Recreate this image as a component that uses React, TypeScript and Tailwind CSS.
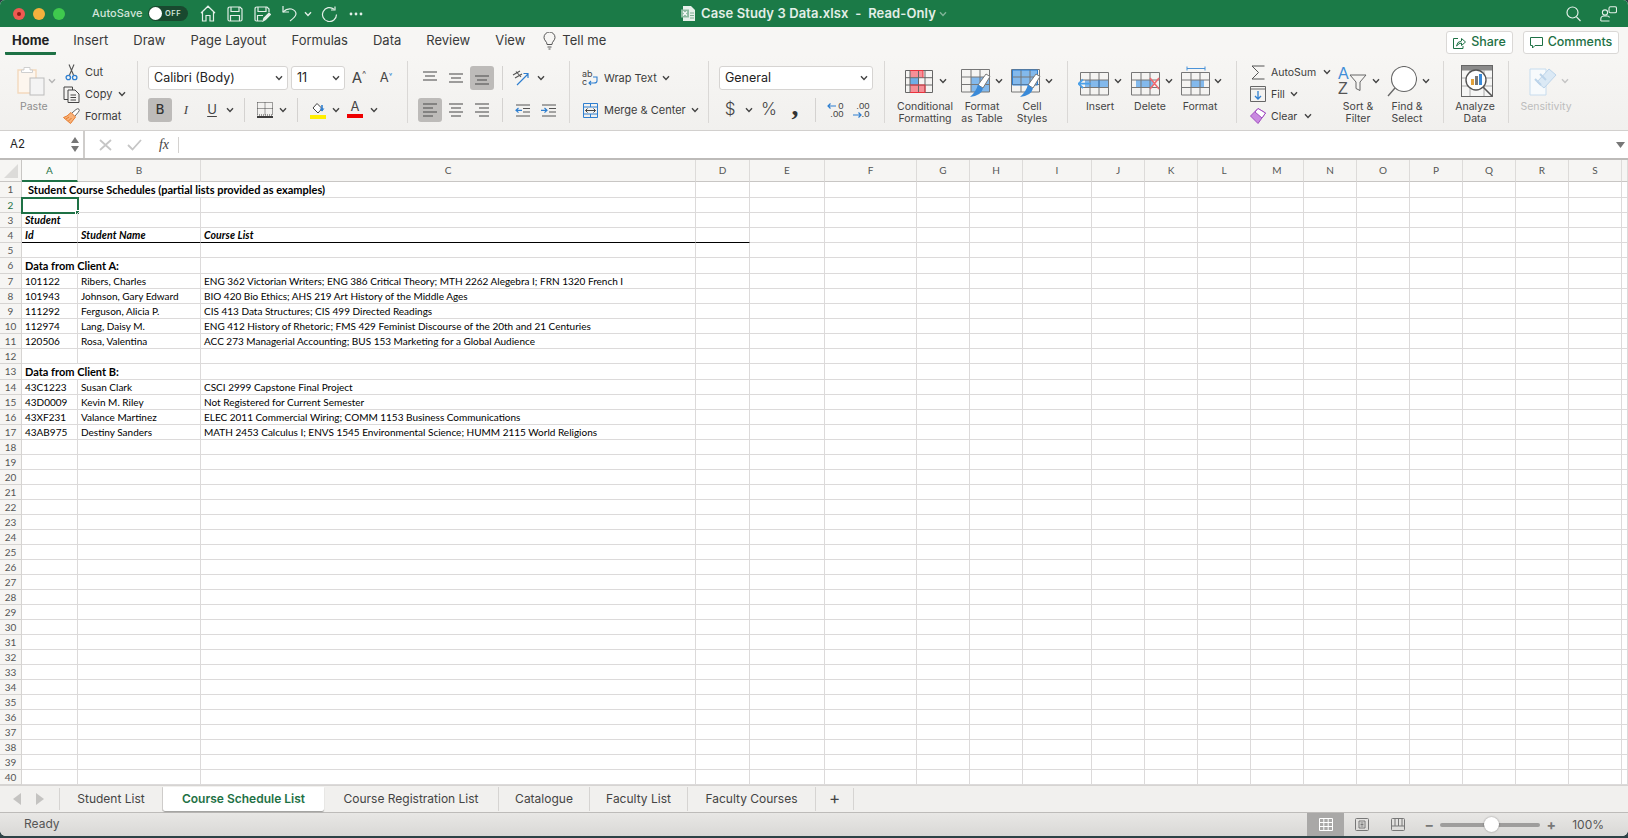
import type { ReactNode } from 'react';

const Slot = ({ className = '', children }: { className?: string; children?: ReactNode }) => (
  <div className={`flex items-center justify-center shrink-0 ${className}`}>{children}</div>
);

const Chev = ({ color = '#444' }: { color?: string }) => (
  <svg width="8" height="6" viewBox="0 0 8 6"><path d="M1 1.2 4 4.4 7 1.2" fill="none" stroke={color} strokeWidth="1.4" /></svg>
);

const Sep = () => <div className="w-px h-[24px] bg-[#d4d2d0]" />;

/* ---------- title bar icons ---------- */
const W = '#e3efe8';
const HomeIcon = () => (
  <svg width="16" height="17" viewBox="0 0 16 17" fill="none" stroke={W} strokeWidth="1.2"><path d="M1 8 8 1.2 15 8M2.5 7V16H6V10.5H10V16H13.5V7" /></svg>
);
const SaveIcon = () => (
  <svg width="16" height="16" viewBox="0 0 16 16" fill="none" stroke={W} strokeWidth="1.2"><path d="M3 1H13L15 3V13.5Q15 15 13.5 15H2.5Q1 15 1 13.5V3Q1 1 3 1Z" /><path d="M4 1V5.5H12V1M3.5 15V9.5H12.5V15" /></svg>
);
const SaveEditIcon = () => (
  <svg width="17" height="16" viewBox="0 0 17 16" fill="none" stroke={W} strokeWidth="1.2"><path d="M8 15H2.5Q1 15 1 13.5V3Q1 1 3 1H13L15 3V6" /><path d="M4 1V5.5H12V1M3.5 15V9.5H9" /><path d="M9 15 10 12 15 7 16.5 8.5 11.5 13.5Z" fill={W} /></svg>
);
const UndoIcon = () => (
  <svg width="15" height="17" viewBox="0 0 15 17" fill="none" stroke={W} strokeWidth="1.2"><path d="M1 1V7H7" /><path d="M1 7Q5 3 9.5 4 14 5.5 14 9 13.5 12 8 16" /></svg>
);
const RedoIcon = () => (
  <svg width="17" height="16" viewBox="0 0 17 16" fill="none" stroke={W} strokeWidth="1.2"><path d="M13 3.2A7 7 0 1 0 15.5 8.5" /><path d="M10 4H14V0.5" /></svg>
);
const Dots = () => (
  <svg width="14" height="4" viewBox="0 0 14 4" fill={W}><circle cx="2" cy="2" r="1.4" /><circle cx="7" cy="2" r="1.4" /><circle cx="12" cy="2" r="1.4" /></svg>
);
const XlsxIcon = () => (
  <svg width="14" height="15" viewBox="0 0 14 15"><path d="M2 0H10L14 4V15H2Z" fill="#e6f0ea" /><path d="M9 7H13M9 9.5H13M9 12H13" stroke="#7fae94" /><rect x="0" y="3.5" width="8" height="8" fill="#8db9a0" /><path d="M2 5.5 6 9.5M6 5.5 2 9.5" stroke="#fff" strokeWidth="1.1" /></svg>
);
const SearchIcon = () => (
  <svg width="15" height="16" viewBox="0 0 15 16" fill="none" stroke={W} strokeWidth="1.2"><circle cx="6.5" cy="6.5" r="5.5" /><path d="M10.5 10.8 14.5 15" /></svg>
);
const PeopleIcon = () => (
  <svg width="17" height="16" viewBox="0 0 17 16" fill="none" stroke={W} strokeWidth="1.1"><rect x="9" y="0.8" width="7.5" height="6" rx="1.5" /><circle cx="5" cy="6.5" r="2.6" /><path d="M0.8 15V13Q0.8 10 4 10H7.5Q9 10 9.5 11.5M0.8 15H9.5" /></svg>
);

/* ---------- clipboard ---------- */
const PasteIcon = () => (
  <svg width="28" height="30" viewBox="0 0 28 30"><path d="M1 4H19V27H1Z" fill="#fdf6ee" stroke="#f3d9bd" strokeWidth="1.4" /><path d="M7 4V1.5H13V4H15.5V6.5H4.5V4Z" fill="#fff" stroke="#cfcfcf" /><rect x="13" y="12" width="14" height="17" fill="#f4f4f4" stroke="#bcbcbc" /></svg>
);
const CutIcon = () => (
  <svg width="13" height="17" viewBox="0 0 13 17" fill="none"><path d="M4 0.5 8.5 11M9 0.5 4.5 11" stroke="#555" strokeWidth="1.1" /><circle cx="3.3" cy="13.5" r="2.2" stroke="#2f7fd0" strokeWidth="1.3" /><circle cx="9.7" cy="13.5" r="2.2" stroke="#2f7fd0" strokeWidth="1.3" /></svg>
);
const CopyIcon = () => (
  <svg width="17" height="17" viewBox="0 0 17 17" fill="none" stroke="#444" strokeWidth="1"><path d="M5 13.5H1V1H9.5V4" /><path d="M5 4H12L16 8V16.5H5Z" /><path d="M7.5 9H13M7.5 11.5H13M7.5 14H13" /></svg>
);
const BrushIcon = () => (
  <svg width="17" height="17" viewBox="0 0 17 17"><path d="M9 5 13 1.5Q15 0 16 1.2 17 2.5 15 4.5L12 8" fill="#fff" stroke="#666" /><path d="M8 4.5 12.5 9 7.5 15.5 0.5 9.5 4 8Z" fill="#f8b27a" stroke="#e57a2c" /><path d="M3 11 6 9M5.5 13 8.5 10" stroke="#e57a2c" /></svg>
);

/* ---------- font ---------- */
const BorderIcon = () => (
  <svg width="16" height="16" viewBox="0 0 16 16" fill="none" stroke="#444" strokeWidth="1" strokeDasharray="1 1"><path d="M0.5 0.5H15.5V13H0.5ZM8 0.5V13M0.5 6.5H15.5" /><path d="M0 15H16" stroke="#111" strokeWidth="1.6" strokeDasharray="none" /></svg>
);
const FillIcon = () => (
  <svg width="16" height="17" viewBox="0 0 16 17"><path d="M3 6 7 1.5 12 6.5 8 11Z" fill="#fff" stroke="#444" /><path d="M12 3V9" stroke="#2f7fd0" strokeWidth="1.6" /><path d="M9.5 6.5 12 9.5 14.5 6.5" fill="#2f7fd0" /><rect x="0" y="13" width="16" height="4" fill="#ffee00" /></svg>
);

/* ---------- alignment ---------- */
const Lines = ({ ys, xs }: { ys: number[]; xs: [number, number][] }) => (
  <svg width="16" height="18" viewBox="0 0 16 18" stroke="#555" strokeWidth="1.1">
    {ys.map((y, i) => (
      <path key={y} d={`M${xs[i][0]} ${y}H${xs[i][1]}`} />
    ))}
  </svg>
);
const OrientIcon = () => (
  <svg width="17" height="16" viewBox="0 0 17 16" fill="none"><path d="M1 5 8 1M3 8 10 4M4 1.5 9 7" stroke="#555" strokeWidth="1.1" /><path d="M5 15 16 4M11.5 3.5H16V8" stroke="#2f7fd0" strokeWidth="1.2" /></svg>
);
const IndentIcon = ({ inc }: { inc?: boolean }) => (
  <svg width="15" height="13" viewBox="0 0 15 13" fill="none"><path d="M1 1H15M8 4.5H15M8 8H15M1 12H15" stroke="#555" /><path d={inc ? 'M0 6.3H6M3.5 4 6 6.3 3.5 8.6' : 'M1 6.3H7M3.5 4 1 6.3 3.5 8.6'} stroke="#2f7fd0" strokeWidth="1.2" /></svg>
);
const MergeIcon = () => (
  <svg width="15" height="15" viewBox="0 0 15 15" fill="none"><path d="M0.5 0.5H14.5V14.5H0.5ZM0.5 4H14.5M0.5 11H14.5M7.5 0.5V4M7.5 11V14.5" stroke="#2f7fd0" /><path d="M2.5 7.5H12.5M4.5 5.5 2.5 7.5 4.5 9.5M10.5 5.5 12.5 7.5 10.5 9.5" stroke="#444" /></svg>
);

/* ---------- number ---------- */
const DecimalIcon = ({ more }: { more?: boolean }) => (
  <div className="relative w-[17px] h-[17px] leading-[8.5px] text-[9.5px] text-[#444] font-['Liberation_Sans',sans-serif]">
    <div className="text-right">{more ? '.00' : '0'}</div>
    <div className="text-right">{more ? '.0' : '.00'}</div>
    <svg className="absolute left-0 top-0" width="10" height="17" viewBox="0 0 10 17" fill="none" stroke="#2f7fd0" strokeWidth="1.2">
      {more ? <path d="M0 13H8M5.5 10.5 8 13 5.5 15.5" /> : <path d="M1 4H9M3.5 1.5 1 4 3.5 6.5" />}
    </svg>
  </div>
);

/* ---------- styles / cells ---------- */
const Cond = () => (
  <svg width="28" height="23" viewBox="0 0 28 23"><rect x="5" y="0.5" width="13" height="7" fill="#f78f97" /><rect x="5" y="15" width="15" height="7.5" fill="#f78f97" /><rect x="5" y="8" width="8" height="7" fill="#70aee8" /><path d="M0.5 0.5H27.5V22.5H0.5ZM0.5 7.7H27.5M0.5 15H27.5M5 0.5V22.5M13.5 0.5V22.5M20 0.5V22.5" fill="none" stroke="#666" /><path d="M5 0.5H18V7.7M5 15H20V22.5H5" fill="none" stroke="#e9333e" /></svg>
);
const TableBrush = ({ cell }: { cell?: boolean }) => (
  <svg width="30" height="30" viewBox="0 0 30 30">
    {cell ? <rect x="2" y="1" width="24" height="15" fill="#83b9ec" /> : <rect x="10" y="8" width="18" height="15" fill="#83b9ec" />}
    <path d="M0.5 0.5H28.5V23H0.5ZM0.5 8H28.5M0.5 15.5H28.5M10 0.5V23M19 0.5V23" fill="none" stroke="#777" />
    {cell && <path d="M1.5 1H26.5V16H1.5Z" fill="none" stroke="#2f7fd0" />}
    <path d="M17 16 25 5 29 7.5 22 19Z" fill="#fff" stroke="#777" />
    <path d="M17 15.5 22 19.5Q20 27 9 28 15 23 17 15.5Z" fill="#3a8ad8" />
  </svg>
);
const CellGrid = ({ children, w = 29, h = 23 }: { children?: ReactNode; w?: number; h?: number }) => (
  <svg width={w + 3} height={h + 7} viewBox={`-2 -6 ${w + 3} ${h + 7}`}>
    {children}
  </svg>
);
const gridPath = 'M0.5 0.5H28.5V23H0.5ZM0.5 8H28.5M0.5 15.5H28.5M10 0.5V23M19 0.5V23';
const InsertIcon = () => (
  <CellGrid>
    <rect x="5" y="8" width="24" height="7.5" fill="#83b9ec" />
    <path d={gridPath} fill="none" stroke="#777" />
    <path d="M19 8V15.5" stroke="#2f7fd0" />
    <path d="M11 11.7H-1M3 7.5-1.5 11.7 3 16" fill="none" stroke="#4ba0e8" strokeWidth="1.8" />
  </CellGrid>
);
const DeleteIcon = () => (
  <CellGrid>
    <rect x="5" y="8" width="17" height="7.5" fill="#83b9ec" />
    <path d={gridPath} fill="none" stroke="#777" />
    <path d="M19 6 28 17M28 6 19 17" stroke="#f06a70" strokeWidth="1.6" />
  </CellGrid>
);
const FormatIcon = () => (
  <CellGrid>
    <rect x="10" y="8" width="13" height="7.5" fill="#83b9ec" />
    <path d={gridPath} fill="none" stroke="#777" />
    <path d="M6 -3.5H24M6 -5.5V-1.5M24 -5.5V-1.5" fill="none" stroke="#4b93d8" />
  </CellGrid>
);

/* ---------- editing ---------- */
const SumIcon = () => (
  <svg width="14" height="15" viewBox="0 0 14 15" fill="none" stroke="#555"><path d="M13.5 1H1L7.5 7.5 1 14H13.5" /></svg>
);
const FillDownIcon = () => (
  <svg width="16" height="16" viewBox="0 0 16 16" fill="none"><path d="M0.5 0.5H15.5V15.5H0.5ZM0.5 3H15.5" stroke="#666" /><path d="M8 5V13M5 10 8 13 11 10" stroke="#2f7fd0" strokeWidth="1.3" /></svg>
);
const EraserIcon = () => (
  <svg width="16" height="16" viewBox="0 0 16 16"><path d="M0.5 8 8 0.5 15.5 5 8 15.5Z" fill="#c98be0" stroke="#a04cc0" /><path d="M5 4 12 10 15.5 5 8 0.5Z" fill="#fff" stroke="#a04cc0" /></svg>
);
const SortIcon = () => (
  <div className="relative w-[30px] h-[30px] font-['Liberation_Sans',sans-serif] text-[16px] leading-[15px]">
    <div className="text-[#3f8ed8]">A</div>
    <div className="text-[#555]">Z</div>
    <svg className="absolute left-[11px] top-[8px]" width="18" height="18" viewBox="0 0 18 18" fill="none" stroke="#666"><path d="M1 1H17L11 8V16.5L7 14.5V8Z" /></svg>
  </div>
);
const FindIcon = () => (
  <svg width="30" height="31" viewBox="0 0 30 31" fill="none" stroke="#666" strokeWidth="1.1"><circle cx="17" cy="13" r="12.5" fill="#fff" /><path d="M8 22 1 30" strokeWidth="1.4" /></svg>
);
const AnalyzeIcon = () => (
  <svg width="32" height="32" viewBox="0 0 32 32"><rect x="0.5" y="0.5" width="31" height="31" fill="#f6f6f5" stroke="#666" /><rect x="1" y="1" width="30" height="4.5" fill="#8a8a8a" /><path d="M1 13H31M1 21H31M9 5V31M23 5V31" stroke="#aaa" /><circle cx="15" cy="15" r="10" fill="#fff" stroke="#555" strokeWidth="1.4" /><rect x="10" y="14" width="3" height="6" fill="#e2a13a" /><rect x="14" y="11" width="3" height="9" fill="#777" /><rect x="18" y="9" width="3" height="11" fill="#3a8ad8" /><path d="M22 22 31 31" stroke="#555" strokeWidth="1.6" /></svg>
);
const SensitivityIcon = () => (
  <svg width="28" height="30" viewBox="0 0 28 30" fill="none"><path d="M1 3H17V29H1Z" fill="#f7fafc" stroke="#c7dcee" /><path d="M8 16 20 3 27 9 15 22Z" fill="#dbe9f5" stroke="#bcd4ea" /><path d="M6 13 12 19M11 8 17 14" stroke="#bcd4ea" strokeWidth="2" /></svg>
);

/* ---------- sheet data ---------- */
const COLS = ['A', 'B', 'C', 'D', 'E', 'F', 'G', 'H', 'I', 'J', 'K', 'L', 'M', 'N', 'O', 'P', 'Q', 'R', 'S', ''];
const TALL = [1, 6, 13];

const DATA: Record<number, [string, string, string]> = {
  7: ['101122', 'Ribers, Charles', 'ENG 362 Victorian Writers; ENG 386 Critical Theory; MTH 2262 Alegebra I; FRN 1320 French I'],
  8: ['101943', 'Johnson, Gary Edward', 'BIO 420 Bio Ethics; AHS 219 Art History of the Middle Ages'],
  9: ['111292', 'Ferguson, Alicia P.', 'CIS 413 Data Structures; CIS 499 Directed Readings'],
  10: ['112974', 'Lang, Daisy M.', 'ENG 412 History of Rhetoric; FMS 429 Feminist Discourse of the 20th and 21 Centuries'],
  11: ['120506', 'Rosa, Valentina', 'ACC 273 Managerial Accounting; BUS 153 Marketing for a Global Audience'],
  14: ['43C1223', 'Susan Clark', 'CSCI 2999 Capstone Final Project'],
  15: ['43D0009', 'Kevin M. Riley', 'Not Registered for Current Semester'],
  16: ['43XF231', 'Valance Martinez', 'ELEC 2011 Commercial Wiring; COMM 1153 Business Communications'],
  17: ['43AB975', 'Destiny Sanders', 'MATH 2453 Calculus I; ENVS 1545 Environmental Science; HUMM 2115 World Religions'],
};

const BOLD = 'font-bold text-[11px] leading-[15px]';
const BOLD_ITALIC = 'font-bold italic text-[10.5px] leading-[15px] tracking-[0.1px]';

function cellContent(row: number, col: number): { text?: string; cls?: string } {
  if (row === 1 && col === 0) return { text: 'Student Course Schedules (partial lists provided as examples)', cls: `${BOLD} pl-[6px]` };
  if (row === 3 && col === 0) return { text: 'Student', cls: BOLD_ITALIC };
  if (row === 4 && col <= 2) return { text: ['Id', 'Student Name', 'Course List'][col], cls: BOLD_ITALIC };
  if (row === 6 && col === 0) return { text: 'Data from Client A:', cls: BOLD };
  if (row === 13 && col === 0) return { text: 'Data from Client B:', cls: BOLD };
  if (DATA[row] && col <= 2) return { text: DATA[row][col], cls: 'text-[10px] leading-[15px]' };
  return {};
}

function Sheet() {
  const rows = Array.from({ length: 40 }, (_, i) => i + 1);
  return (
    <div className="h-[625px] overflow-hidden bg-white grid grid-cols-[22px_56px_123px_495px_54px_75px_92px_53px_53px_69px_53px_53px_53px_53px_53px_53px_53px_53px_53px_53px_6px] content-start">
      {/* corner */}
      <div className="h-[22px] bg-[#f6f5f3] border-r border-b border-[#c8c6c4] flex items-end justify-end pr-[3px] pb-[3px]">
        <svg width="14" height="14" viewBox="0 0 14 14"><path d="M14 0V14H0Z" fill="#dcdbd9" /></svg>
      </div>
      {COLS.map((c, i) => (
        <div
          key={`h${i}`}
          className={`h-[22px] flex items-center justify-center text-[10px] font-['Lato',sans-serif] border-r ${
            i === 0
              ? 'bg-[#fafaf9] text-[#1e7145] border-b-2 border-b-[#1e7145] border-r-[#e0dfdd]'
              : 'bg-[#f6f5f3] text-[#555] border-b border-b-[#c8c6c4] border-r-[#dddbd9]'
          }`}
        >
          {c}
        </div>
      ))}
      {rows.map((r) => {
        const h = TALL.includes(r) ? 'h-[16px]' : 'h-[15px]';
        return [
          <div
            key={`n${r}`}
            className={`${h} flex items-center justify-center text-[10px] font-['Lato',sans-serif] bg-[#f6f5f3] border-r border-b border-[#d6d4d2] ${
              r === 2 ? 'text-[#1e7145]' : 'text-[#555]'
            }`}
          >
            {r}
          </div>,
          ...COLS.map((_, c) => {
            const { text, cls } = cellContent(r, c);
            const noRight = (r === 1 && c <= 1) || ((r === 6 || r === 13) && c === 0);
            const rule = r === 4 && c <= 3;
            return (
              <div
                key={`${r}-${c}`}
                className={`${h} relative pl-[3px] whitespace-nowrap text-black font-['Lato',sans-serif] ${
                  noRight ? '' : 'border-r border-r-[#dcdada]'
                } border-b ${rule ? 'border-b-black' : 'border-b-[#dcdada]'} ${cls ?? ''}`}
              >
                {text}
                {r === 2 && c === 0 && (
                  <div className="absolute -left-[1px] -top-[1px] w-[58px] h-[17px] border-2 border-[#1e7145]">
                    <div className="absolute -right-[3px] -bottom-[3px] w-[5px] h-[5px] bg-[#1e7145] border border-white" />
                  </div>
                )}
              </div>
            );
          }),
        ];
      })}
    </div>
  );
}

const SMALL = "text-[11px] leading-[13px] text-[#3c3c3c]";
const LABEL = "text-[10.5px] leading-[12px] text-[#444] text-center shrink-0";

function Ribbon() {
  return (
    <div className="h-[76px] pt-[6px] flex bg-gradient-to-b from-[#f7f6f4] to-[#f1f0ee] border-b border-[#d2d0ce] shrink-0">
      {/* Clipboard */}
      <div className="w-[138px] h-[62px] flex border-r border-[#dad8d6] shrink-0">
        <div className="w-[62px] pl-[17px] pt-[5px] shrink-0">
          <div className="flex items-center">
            <PasteIcon />
            <Slot className="w-[14px]"><Chev color="#b5b5b5" /></Slot>
          </div>
          <div className="text-[10.5px] leading-[12px] text-[#8e8e8e] mt-[5px] ml-[3px]">Paste</div>
        </div>
        <div className="flex flex-col shrink-0">
          {[
            { ic: <CutIcon />, t: 'Cut' },
            { ic: <CopyIcon />, t: 'Copy', chev: true },
            { ic: <BrushIcon />, t: 'Format' },
          ].map((x) => (
            <div key={x.t} className="h-[22px] flex items-center shrink-0">
              <Slot className="w-[18px]">{x.ic}</Slot>
              <span className={`ml-[5px] ${SMALL}`}>{x.t}</span>
              {x.chev && <Slot className="w-[16px] ml-[2px]"><Chev /></Slot>}
            </div>
          ))}
        </div>
      </div>

      {/* Font */}
      <div className="w-[270px] h-[62px] pl-[10px] pt-[5px] border-r border-[#dad8d6] shrink-0">
        <div className="flex h-[24px]">
          <div className="w-[140px] bg-white rounded-[3px] border border-[#d6d4d2] flex items-center justify-between pl-[5px] pr-[4px] text-[12.5px] text-[#222]">
            Calibri (Body)<Chev />
          </div>
          <div className="w-[54px] ml-[3px] bg-white rounded-[3px] border border-[#d6d4d2] flex items-center justify-between pl-[5px] pr-[4px] text-[12.5px] text-[#222]">
            11<Chev />
          </div>
          <Slot className="w-[26px] ml-[1px] text-[15px] text-[#444]">A<span className="text-[9px] -mt-[8px] text-[#555]">^</span></Slot>
          <Slot className="w-[28px] text-[13px] text-[#444]">A<span className="text-[8px] -mt-[7px] text-[#2f7fd0]">˅</span></Slot>
        </div>
        <div className="flex h-[24px] mt-[8px] text-[#444]">
          <Slot className="w-[24px] rounded-[3px] bg-[#bdbbb9] text-[13px] font-medium text-[#333]">B</Slot>
          <Slot className="w-[28px] text-[13px] italic font-['Liberation_Serif',serif]">I</Slot>
          <Slot className="w-[24px] text-[13px] underline underline-offset-2">U</Slot>
          <Slot className="w-[12px]"><Chev /></Slot>
          <Slot className="w-[16px]"><Sep /></Slot>
          <Slot className="w-[25px]"><BorderIcon /></Slot>
          <Slot className="w-[12px]"><Chev /></Slot>
          <Slot className="w-[16px]"><Sep /></Slot>
          <Slot className="w-[25px]"><FillIcon /></Slot>
          <Slot className="w-[12px]"><Chev /></Slot>
          <div className="w-[26px] flex flex-col items-center shrink-0 pt-[1px]">
            <span className="text-[13px] leading-[14px] text-[#444]">A</span>
            <div className="w-[16px] h-[4px] bg-[#ee0000] mt-[1px]" />
          </div>
          <Slot className="w-[12px]"><Chev /></Slot>
        </div>
      </div>

      {/* Alignment */}
      <div className="w-[162px] h-[62px] pl-[10px] pt-[5px] border-r border-[#dad8d6] shrink-0">
        <div className="flex h-[24px]">
          <Slot className="w-[24px]"><Lines ys={[3, 7, 11]} xs={[[1, 15], [3, 13], [1, 15]]} /></Slot>
          <Slot className="w-[24px] ml-[2px]"><Lines ys={[5, 9, 13]} xs={[[1, 15], [3, 13], [1, 15]]} /></Slot>
          <Slot className="w-[24px] ml-[2px] bg-[#bdbbb9] rounded-[3px]"><Lines ys={[7, 11, 15]} xs={[[1, 15], [3, 13], [1, 15]]} /></Slot>
          <Slot className="w-[16px]"><Sep /></Slot>
          <Slot className="w-[20px]"><OrientIcon /></Slot>
          <Slot className="w-[12px] ml-[5px]"><Chev /></Slot>
        </div>
        <div className="flex h-[24px] mt-[8px]">
          <Slot className="w-[24px] bg-[#bdbbb9] rounded-[3px]"><Lines ys={[3, 7, 11, 15]} xs={[[1, 15], [1, 11], [1, 15], [1, 11]]} /></Slot>
          <Slot className="w-[24px] ml-[2px]"><Lines ys={[3, 7, 11, 15]} xs={[[1, 15], [3, 13], [1, 15], [3, 13]]} /></Slot>
          <Slot className="w-[24px] ml-[2px]"><Lines ys={[3, 7, 11, 15]} xs={[[1, 15], [5, 15], [1, 15], [5, 15]]} /></Slot>
          <Slot className="w-[16px]"><Sep /></Slot>
          <Slot className="w-[24px]"><IndentIcon /></Slot>
          <Slot className="w-[24px] ml-[2px]"><IndentIcon inc /></Slot>
        </div>
      </div>

      {/* Wrap / merge */}
      <div className="w-[139px] h-[62px] pt-[5px] pl-[11px] border-r border-[#dad8d6] shrink-0">
        <div className="flex items-center h-[24px]">
          <Slot className="w-[18px]">
            <div className="relative w-[16px] h-[16px] text-[9px] leading-[8px] text-[#444]">
              ab<br />c
              <svg className="absolute right-0 top-[6px]" width="10" height="10" viewBox="0 0 10 10" fill="none" stroke="#2f7fd0" strokeWidth="1.1"><path d="M5 1H9V5Q9 7 6 7H1M3 5 1 7 3 9" /></svg>
            </div>
          </Slot>
          <span className={`ml-[5px] ${SMALL}`}>Wrap Text</span>
          <Slot className="w-[12px] ml-[3px]"><Chev /></Slot>
        </div>
        <div className="flex items-center h-[24px] mt-[8px]">
          <Slot className="w-[18px]"><MergeIcon /></Slot>
          <span className={`ml-[5px] ${SMALL}`}>Merge &amp; Center</span>
          <Slot className="w-[12px] ml-[3px]"><Chev /></Slot>
        </div>
      </div>

      {/* Number */}
      <div className="w-[176px] h-[62px] pl-[10px] pt-[5px] border-r border-[#dad8d6] shrink-0">
        <div className="w-[154px] h-[24px] bg-white rounded-[3px] border border-[#d6d4d2] flex items-center justify-between pl-[5px] pr-[4px] text-[12.5px] text-[#222]">
          General<Chev />
        </div>
        <div className="flex h-[24px] mt-[8px] text-[#444]">
          <Slot className="w-[22px] text-[17px] font-light">$</Slot>
          <Slot className="w-[12px] ml-[2px]"><Chev /></Slot>
          <Slot className="w-[24px] ml-[2px] text-[17px] font-light">%</Slot>
          <Slot className="w-[20px] ml-[4px] h-[16px] text-[28px] font-bold font-['Liberation_Serif',serif] leading-[16px] text-[#333]">,</Slot>
          <Slot className="w-[20px]"><Sep /></Slot>
          <Slot className="w-[20px]"><DecimalIcon /></Slot>
          <Slot className="w-[20px] ml-[6px]"><DecimalIcon more /></Slot>
        </div>
      </div>

      {/* Styles */}
      <div className="w-[183px] h-[62px] border-r border-[#dad8d6] shrink-0">
        <div className="h-[40px] flex items-center">
          <Slot className="w-[28px] ml-[20px]"><Cond /></Slot>
          <Slot className="w-[10px] ml-[5px]"><Chev /></Slot>
          <Slot className="w-[30px] ml-[13px] mt-[6px]"><TableBrush /></Slot>
          <Slot className="w-[10px] ml-[3px]"><Chev /></Slot>
          <Slot className="w-[30px] ml-[7px] mt-[6px]"><TableBrush cell /></Slot>
          <Slot className="w-[10px] ml-[3px]"><Chev /></Slot>
        </div>
        <div className="flex">
          <div className={`w-[60px] ml-[10px] ${LABEL}`}>Conditional<br />Formatting</div>
          <div className={`w-[46px] ml-[4px] ${LABEL}`}>Format<br />as Table</div>
          <div className={`w-[40px] ml-[7px] ${LABEL}`}>Cell<br />Styles</div>
        </div>
      </div>

      {/* Cells */}
      <div className="w-[169px] h-[62px] border-r border-[#dad8d6] shrink-0">
        <div className="h-[40px] flex items-center">
          <Slot className="w-[32px] ml-[10px]"><InsertIcon /></Slot>
          <Slot className="w-[10px] ml-[3px]"><Chev /></Slot>
          <Slot className="w-[32px] ml-[6px]"><DeleteIcon /></Slot>
          <Slot className="w-[10px] ml-[3px]"><Chev /></Slot>
          <Slot className="w-[32px] ml-[5px]"><FormatIcon /></Slot>
          <Slot className="w-[10px] ml-[2px]"><Chev /></Slot>
        </div>
        <div className="flex">
          <div className={`w-[50px] ml-[7px] ${LABEL}`}>Insert</div>
          <div className={`w-[50px] ${LABEL}`}>Delete</div>
          <div className={`w-[50px] ${LABEL}`}>Format</div>
        </div>
      </div>

      {/* Editing */}
      <div className="w-[207px] h-[62px] flex border-r border-[#dad8d6] shrink-0">
        <div className="w-[101px] flex flex-col shrink-0">
          {[
            { ic: <SumIcon />, t: 'AutoSum', g: 'ml-[6px]' },
            { ic: <FillDownIcon />, t: 'Fill', g: 'ml-[4px]' },
            { ic: <EraserIcon />, t: 'Clear', g: 'ml-[6px]' },
          ].map((x) => (
            <div key={x.t} className="h-[22px] flex items-center pl-[13px] shrink-0">
              <Slot className="w-[16px]">{x.ic}</Slot>
              <span className={`ml-[5px] text-[10.5px] leading-[13px] text-[#3c3c3c]`}>{x.t}</span>
              <Slot className={`w-[10px] ${x.g}`}><Chev /></Slot>
            </div>
          ))}
        </div>
        <div className="flex flex-col">
          <div className="h-[40px] flex items-center shrink-0">
            <Slot className="w-[30px]"><SortIcon /></Slot>
            <Slot className="w-[10px] ml-[3px]"><Chev /></Slot>
            <Slot className="w-[30px] ml-[6px]"><FindIcon /></Slot>
            <Slot className="w-[10px] ml-[4px]"><Chev /></Slot>
          </div>
          <div className="flex">
            <div className={`w-[40px] ${LABEL}`}>Sort &amp;<br />Filter</div>
            <div className={`w-[40px] ml-[9px] ${LABEL}`}>Find &amp;<br />Select</div>
          </div>
        </div>
      </div>

      {/* Analyze */}
      <div className="w-[65px] h-[62px] border-r border-[#dad8d6] shrink-0">
        <Slot className="h-[40px] pl-[1px]"><AnalyzeIcon /></Slot>
        <div className={`w-[50px] ml-[6px] ${LABEL}`}>Analyze<br />Data</div>
      </div>

      {/* Sensitivity */}
      <div className="w-[90px] h-[62px] shrink-0">
        <div className="h-[40px] flex items-center pl-[20px]">
          <SensitivityIcon />
          <Slot className="w-[10px] ml-[3px]"><Chev color="#c4c4c4" /></Slot>
        </div>
        <div className={`w-[60px] ml-[7px] text-[10.5px] leading-[12px] text-[#bdbdbd] text-center`}>Sensitivity</div>
      </div>
    </div>
  );
}

const SHEETS = [
  { t: 'Student List', w: 'w-[103px]' },
  { t: 'Course Schedule List', w: 'w-[161px]', active: true },
  { t: 'Course Registration List', w: 'w-[175px]' },
  { t: 'Catalogue', w: 'w-[91px]' },
  { t: 'Faculty List', w: 'w-[98px]' },
  { t: 'Faculty Courses', w: 'w-[128px]' },
];

export default function App() {
  return (
    <div className="w-[1628px] h-[838px] overflow-hidden bg-[#2e4246] font-['Inter',sans-serif]">
      <div className="h-[836px] rounded-t-[5px] rounded-b-[6px] overflow-hidden flex flex-col bg-white">
        {/* Title bar */}
        <div className="h-[27px] bg-[#1b7a47] flex items-center relative shrink-0">
          <div className="flex items-center gap-[8px] pl-[13px]">
            <div className="w-[12px] h-[12px] rounded-full bg-[#ee5a52] flex items-center justify-center"><div className="w-[4px] h-[4px] rounded-full bg-[#8c1a14]" /></div>
            <div className="w-[12px] h-[12px] rounded-full bg-[#f5b13d]" />
            <div className="w-[12px] h-[12px] rounded-full bg-[#3fc94e]" />
          </div>
          <span className="ml-[27px] w-[50px] shrink-0 text-[11px] font-medium text-[#d3e5db]">AutoSave</span>
          <div className="ml-[6px] w-[40px] h-[15px] rounded-full bg-[#19492f] flex items-center pl-[1px] shrink-0">
            <div className="w-[13px] h-[13px] rounded-full bg-white" />
            <span className="ml-[3px] text-[7.5px] font-semibold tracking-[0.5px] text-[#d3e5db]">OFF</span>
          </div>
          <Slot className="w-[20px] ml-[10px]"><HomeIcon /></Slot>
          <Slot className="w-[20px] ml-[7px]"><SaveIcon /></Slot>
          <Slot className="w-[20px] ml-[7px]"><SaveEditIcon /></Slot>
          <Slot className="w-[20px] ml-[7px]"><UndoIcon /></Slot>
          <Slot className="w-[10px] ml-[4px]"><Chev color={W} /></Slot>
          <Slot className="w-[20px] ml-[6px]"><RedoIcon /></Slot>
          <Slot className="w-[16px] ml-[9px]"><Dots /></Slot>
          <div className="ml-[317px] flex items-center">
            <XlsxIcon />
            <span className="ml-[6px] text-[13px] font-semibold tracking-[0.1px] text-[#e3efe8] whitespace-pre">Case Study 3 Data.xlsx  -  Read-Only</span>
            <span className="ml-[3px] opacity-50"><Chev color={W} /></span>
          </div>
          <div className="ml-auto flex items-center pr-[11px] gap-[19px]">
            <SearchIcon />
            <PeopleIcon />
          </div>
        </div>

        {/* Ribbon tabs */}
        <div className="h-[28px] bg-[#f7f6f4] flex items-stretch shrink-0 text-[13px] text-[#3a3a3a]">
          <div className="ml-[5px] px-[7px] pt-[2px] font-bold text-[#222] flex items-center border-b-[3px] border-[#1e7145] rounded-b-[1px]">Home</div>
          <div className="flex items-center gap-[25px] ml-[17px]">
            <span>Insert</span>
            <span>Draw</span>
            <span>Page Layout</span>
            <span>Formulas</span>
            <span>Data</span>
            <span>Review</span>
            <span>View</span>
          </div>
          <div className="flex items-center ml-[18px]">
            <svg width="13" height="18" viewBox="0 0 13 18" fill="none" stroke="#555"><path d="M4 12.5Q4 10.5 2.5 9 1 7.2 1 5.5A5.5 5.5 0 0 1 12 5.5Q12 7.2 10.5 9 9 10.5 9 12.5ZM4.5 15H8.5M5.5 17H7.5" /></svg>
            <span className="ml-[6px]">Tell me</span>
          </div>
          <div className="ml-auto flex items-start pt-[4px] pr-[9px] text-[#1e7145] font-medium text-[12.5px]">
            <div className="w-[67px] h-[23px] bg-white border border-[#dad8d6] rounded-[3px] flex items-center justify-center gap-[5px]">
              <svg width="13" height="12" viewBox="0 0 13 12" fill="none" stroke="#1e7145"><path d="M3.5 9Q4 4.5 8.5 4V1.5L12.5 5 8.5 8.5V6Q6 6 3.5 9Z" /><path d="M5 1.5H0.5V11.5H10V9" /></svg>
              Share
            </div>
            <div className="w-[96px] h-[23px] ml-[10px] bg-white border border-[#dad8d6] rounded-[3px] flex items-center justify-center gap-[5px]">
              <svg width="13" height="12" viewBox="0 0 13 12" fill="none" stroke="#1e7145"><path d="M0.5 0.5H12.5V8.5H5L2.5 11V8.5H0.5Z" /></svg>
              Comments
            </div>
          </div>
        </div>

        <Ribbon />

        {/* Formula bar */}
        <div className="h-[29px] flex border-b-2 border-[#bdbbb9] bg-white shrink-0">
          <div className="w-[85px] flex items-center justify-between pl-[10px] pr-[4px] border-r-2 border-[#cfcdcb] text-[11.5px] text-[#222]">
            A2
            <div className="flex flex-col gap-[3px]">
              <svg width="8" height="6" viewBox="0 0 8 6"><path d="M4 0 8 6H0Z" fill="#777" /></svg>
              <svg width="8" height="6" viewBox="0 0 8 6"><path d="M0 0H8L4 6Z" fill="#777" /></svg>
            </div>
          </div>
          <Slot className="w-[14px] ml-[13px]">
            <svg width="13" height="12" viewBox="0 0 13 12" stroke="#c6c6c6" strokeWidth="1.8"><path d="M1 1 12 11M12 1 1 11" /></svg>
          </Slot>
          <Slot className="w-[16px] ml-[14px]">
            <svg width="15" height="12" viewBox="0 0 15 12" fill="none" stroke="#c6c6c6" strokeWidth="1.8"><path d="M1 6 5.5 10.5 14 1" /></svg>
          </Slot>
          <Slot className="w-[16px] ml-[14px] text-[14px] italic font-['Liberation_Serif',serif] text-[#444]">fx</Slot>
          <div className="w-px h-[16px] bg-[#d4d2d0] self-center ml-[6px]" />
          <div className="ml-auto pr-[3px] flex items-center">
            <svg width="9" height="6" viewBox="0 0 9 6"><path d="M0 0H9L4.5 6Z" fill="#777" /></svg>
          </div>
        </div>

        <Sheet />

        {/* Sheet tabs */}
        <div className="h-[28px] bg-[#f1f0ee] border-t border-[#d6d4d2] flex items-center shrink-0 border-b border-b-[#bdbbb9]">
          <div className="w-[60px] h-[22px] flex items-center pl-[13px] gap-[15px] border-r border-[#d6d4d2] shrink-0">
            <svg width="8" height="12" viewBox="0 0 8 12"><path d="M8 0V12L0 6Z" fill="#c4c3c1" /></svg>
            <svg width="8" height="12" viewBox="0 0 8 12"><path d="M0 0V12L8 6Z" fill="#c4c3c1" /></svg>
          </div>
          {SHEETS.map((s) => (
            <div
              key={s.t}
              className={`${s.w} h-[24px] shrink-0 flex items-center justify-center text-[12px] ${
                s.active
                  ? 'bg-white text-[#1e7145] font-semibold shadow-[0_1px_1px_rgba(0,0,0,0.35)] rounded-b-[2px]'
                  : 'text-[#444] border-r border-[#d6d4d2]'
              }`}
            >
              {s.t}
            </div>
          ))}
          <Slot className="w-[38px] h-[22px] text-[17px] text-[#444] border-r border-[#d6d4d2]">+</Slot>
        </div>

        {/* Status bar */}
        <div className="flex-1 bg-gradient-to-b from-[#e8e7e5] to-[#d9d8d6] flex items-stretch text-[12px] text-[#555]">
          <span className="ml-[24px] self-center -mt-[1px]">Ready</span>
          <Slot className="ml-auto w-[37px] bg-[#a9a8a7]">
            <svg width="14" height="13" viewBox="0 0 14 13" fill="none" stroke="#fff"><path d="M0.5 0.5H13.5V12.5H0.5ZM0.5 4.5H13.5M0.5 8.5H13.5M4.8 0.5V12.5M9.2 0.5V12.5" /></svg>
          </Slot>
          <Slot className="w-[36px]">
            <svg width="14" height="13" viewBox="0 0 14 13" fill="none" stroke="#777"><rect x="0.5" y="0.5" width="13" height="12" rx="1" /><path d="M4 3H10V10H4ZM5.5 5H8.5M5.5 6.5H8.5M5.5 8H8.5" /></svg>
          </Slot>
          <Slot className="w-[36px]">
            <svg width="14" height="13" viewBox="0 0 14 13" fill="none" stroke="#777"><rect x="0.5" y="0.5" width="13" height="12" rx="1" /><path d="M0.5 8H7.5V0.5M4 0.5V8M11 0.5V8H13.5M7.5 8H11" /></svg>
          </Slot>
          <Slot className="w-[10px] ml-[8px] text-[14px] font-bold text-[#777]">−</Slot>
          <div className="w-[100px] ml-[6px] flex items-center relative">
            <div className="w-full h-[4px] rounded-full bg-[#9e9d9c]" />
            <div className="absolute left-[44px] w-[15px] h-[15px] rounded-full bg-white shadow-[0_0_2px_rgba(0,0,0,0.4)]" />
          </div>
          <Slot className="w-[10px] ml-[6px] text-[14px] font-bold text-[#777]">+</Slot>
          <span className="ml-[16px] mr-[24px] self-center text-[12px] text-[#555]">100%</span>
        </div>
      </div>
    </div>
  );
}
